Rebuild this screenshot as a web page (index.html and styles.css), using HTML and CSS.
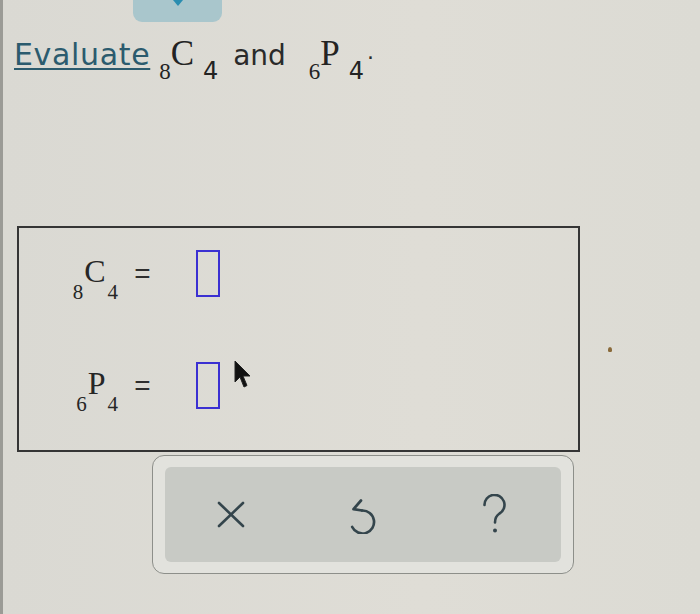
FILE: index.html
```html
<!DOCTYPE html>
<html>
<head>
<meta charset="utf-8">
<link rel="stylesheet" href="styles.css">
</head>
<body>
<div class="page">
  <div class="tab">
    <svg class="tab-mark" width="14" height="7" viewBox="0 0 14 7"><path d="M2 0 L7 6 L12 0 Z" fill="#2a8db0"/></svg>
  </div>
  <p class="prompt"><a class="link">Evaluate</a> <span class="pm"><span class="pre">8</span>C<span class="post">4</span></span> <span class="and">and</span> <span class="pm pm-second"><span class="pre">6</span>P<span class="post">4</span></span><span class="dot">.</span></p>

  <div class="answer-box">
    <div class="row">
      <span class="math"><span class="msub">8</span><span class="mvar">C</span><span class="msub">4</span></span>
      <span class="eq">=</span>
      <span class="blank"></span>
    </div>
    <div class="row">
      <span class="math"><span class="msub">6</span><span class="mvar">P</span><span class="msub">4</span></span>
      <span class="eq">=</span>
      <span class="blank"></span>
    </div>
  </div>

  <div class="keypad">
    <div class="keys">
      <span class="key">
        <svg width="28" height="27" viewBox="0 0 28 27"><path d="M2 2 L26 25 M26 2 L2 25" stroke="#34454c" stroke-width="2.6" stroke-linecap="round" fill="none"/></svg>
      </span>
      <span class="key">
        <svg width="28" height="38" viewBox="0 0 28 38"><path d="M13 14.5 A 11.5 11.5 0 1 1 3.2 31" stroke="#34454c" stroke-width="2.7" stroke-linecap="round" fill="none"/><path d="M12 4.5 L4.5 13.2 L13 14.5" stroke="#34454c" stroke-width="2.7" stroke-linecap="round" stroke-linejoin="round" fill="none"/></svg>
      </span>
      <span class="key">
        <svg width="28" height="41" viewBox="0 0 28 41"><path d="M3.5 11 A 10 10 0 1 1 18.5 19.5 Q 14 22.5 14 28.5" stroke="#34454c" stroke-width="2.6" stroke-linecap="round" fill="none"/><circle cx="14" cy="36.5" r="2" fill="#34454c"/></svg>
      </span>
    </div>
  </div>

  <svg class="cursor" width="20" height="30" viewBox="0 0 20 30"><path d="M2 1 L2 22 L7 17 L11 27 L14 25.5 L10 16 L17 16 Z" fill="#111" stroke="#222" stroke-width="1"/></svg>
  <span class="speck"></span>
</div>
</body>
</html>
```

FILE: styles.css
```css
html, body {
  margin: 0;
  padding: 0;
}
body {
  background: #dddcd5;
}
.page {
  position: relative;
  width: 697px;
  height: 614px;
  border-left: 3px solid #9b9b96;
  background: linear-gradient(90deg, #dad9d3 0%, #dfddd6 60%, #dcdbd4 100%);
  overflow: hidden;
}
.tab {
  margin-left: 130px;
  width: 89px;
  height: 22px;
  background: #a9c6cc;
  border-radius: 0 0 9px 9px;
  display: flex;
  justify-content: center;
}
.tab-mark {
  display: block;
}
.prompt {
  margin: 12px 0 0 11px;
  height: 36px;
  line-height: 36px;
  font-family: "DejaVu Sans", Verdana, sans-serif;
  font-size: 28px;
  color: #2a2a2a;
  white-space: nowrap;
}
.link {
  font-size: 30px;
  letter-spacing: 0.65px;
  color: #2b5b6e;
  text-decoration: underline;
  text-decoration-thickness: 2px;
  text-underline-offset: 3px;
}
.pm {
  font-family: "Liberation Serif", "Times New Roman", serif;
  font-size: 35px;
  color: #232323;
}
.pm-second {
  margin-left: 14px;
}
.pre {
  font-size: 23px;
  vertical-align: -14px;
  line-height: 0;
}
.post {
  font-family: "DejaVu Sans", sans-serif;
  font-size: 24px;
  vertical-align: -14px;
  line-height: 0;
  margin-left: 9px;
}
.and {
  margin-left: 6px;
}
.dot {
  font-size: 22px;
  vertical-align: 6px;
  margin-left: 3px;
}
.answer-box {
  margin: 156px 0 0 14px;
  width: 563px;
  height: 226px;
  box-sizing: border-box;
  border: 2px solid #353535;
  padding: 22px 0 0 47px;
  display: flex;
  flex-direction: column;
  gap: 65px;
}
.row {
  display: flex;
  align-items: flex-start;
  height: 47px;
}
.math {
  width: 52px;
  padding-top: 6px;
  text-align: right;
  font-family: "Liberation Serif", "Times New Roman", serif;
  color: #262626;
  line-height: 31px;
  white-space: nowrap;
}
.mvar {
  font-size: 32px;
  margin: 0 2px 0 1px;
}
.msub {
  font-size: 21px;
  line-height: 0;
  vertical-align: -17px;
}
.eq {
  margin-left: 16px;
  width: 17px;
  font-family: "Liberation Sans", Arial, sans-serif;
  font-size: 28px;
  line-height: 47px;
  color: #2e2e2e;
  text-align: center;
}
.blank {
  margin-left: 45px;
  width: 24px;
  height: 47px;
  box-sizing: border-box;
  border: 2px solid #3b30d2;
}
.keypad {
  margin: 3px 0 0 149px;
  width: 422px;
  height: 119px;
  box-sizing: border-box;
  border: 1px solid #8d8f8a;
  border-radius: 12px;
  background: #e2e2dd;
  padding: 11px 12px 0 12px;
}
.keys {
  height: 95px;
  border-radius: 6px;
  background: #c8cac5;
  display: grid;
  grid-template-columns: 1fr 1fr 1fr;
  align-items: center;
  justify-items: center;
}
.key {
  display: flex;
  align-items: center;
  justify-content: center;
}
.key svg {
  display: block;
}
.cursor {
  position: absolute;
  left: 230px;
  top: 360px;
}
.speck {
  position: absolute;
  left: 605px;
  top: 347px;
  width: 4px;
  height: 5px;
  border-radius: 50% 50% 30% 30%;
  background: #8a6a3a;
}
```
